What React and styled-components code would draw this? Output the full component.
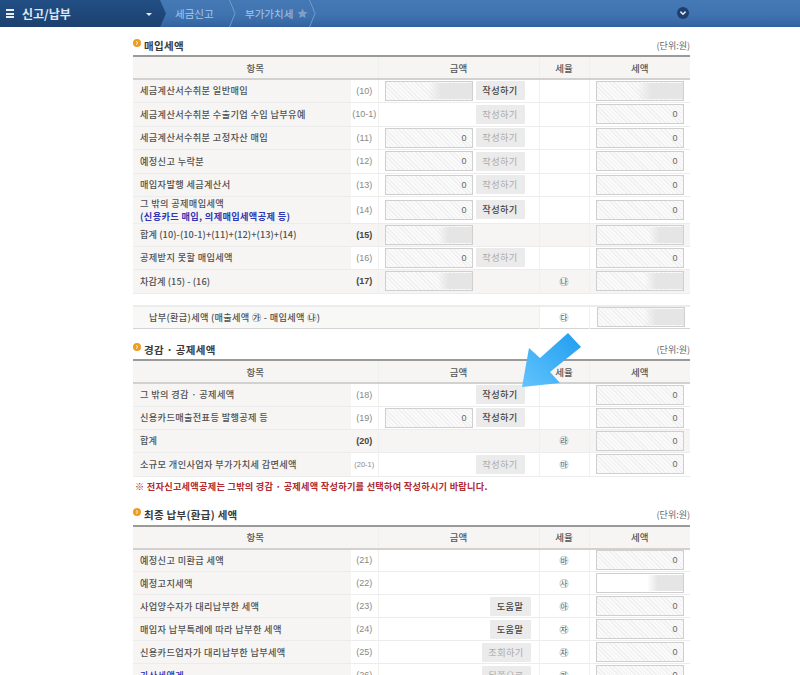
import React from 'react'
import styled, { createGlobalStyle } from 'styled-components'

const GlobalStyle = createGlobalStyle`
  html, body {
    margin: 0;
    padding: 0;
    background: #fff;
    overflow: hidden;
    height: 675px;
  }
  body {
    font-family: "Noto Sans CJK KR", "Liberation Sans", sans-serif;
    color: #4a4a4a;
  }
`

const section1 = [
  { h: 23, label: '세금계산서수취분 일반매입', no: '(10)', input: true, patch: 44, btn: '작성하기', strong: true, tax: true, taxPatch: 46 },
  { h: 24, label: '세금계산서수취분 수출기업 수입 납부유예', no: '(10-1)', btn: '작성하기', tax: '0' },
  { h: 23, label: '세금계산서수취분 고정자산 매입', no: '(11)', input: '0', btn: '작성하기', tax: '0' },
  { h: 24, label: '예정신고 누락분', no: '(12)', input: '0', btn: '작성하기', tax: '0' },
  { h: 23, label: '매입자발행 세금계산서', no: '(13)', input: '0', btn: '작성하기', tax: '0' },
  { h: 27, label: '그 밖의 공제매입세액', sub: '(신용카드 매입, 의제매입세액공제 등)', no: '(14)', input: '0', btn: '작성하기', strong: true, tax: '0' },
  { h: 23, label: '합계 (10)-(10-1)+(11)+(12)+(13)+(14)', no: '(15)', total: true, input: true, patch: 34, tax: true, taxPatch: 34 },
  { h: 23, label: '공제받지 못할 매입세액', no: '(16)', input: '0', btn: '작성하기', tax: '0' },
  { h: 24, label: '차감계 (15) - (16)', no: '(17)', total: true, input: true, patch: 34, rate: '㉯', tax: true, taxPatch: 38 },
]

const section2 = [
  { h: 23, label: '그 밖의 경감 · 공제세액', no: '(18)', btn: '작성하기', strong: true, tax: '0' },
  { h: 23, label: '신용카드매출전표등 발행공제 등', no: '(19)', input: '0', btn: '작성하기', strong: true, tax: '0' },
  { h: 23, label: '합계', no: '(20)', total: true, rate: '㉱', tax: '0' },
  { h: 24, label: '소규모 개인사업자 부가가치세 감면세액', no: '(20-1)', small: true, btn: '작성하기', rate: '㉲', tax: '0' },
]

const section3 = [
  { h: 23, label: '예정신고 미환급 세액', no: '(21)', rate: '㉳', tax: '0' },
  { h: 23, label: '예정고지세액', no: '(22)', rate: '㉴', tax: true, taxPatch: 36, white: true },
  { h: 23, label: '사업양수자가 대리납부한 세액', no: '(23)', btn: '도움말', narrow: true, strong: true, rate: '㉵', tax: '0' },
  { h: 23, label: '매입자 납부특례에 따라 납부한 세액', no: '(24)', btn: '도움말', narrow: true, strong: true, rate: '㉶', tax: '0' },
  { h: 23, label: '신용카드업자가 대리납부한 납부세액', no: '(25)', btn: '조회하기', rate: '㉷', tax: '0' },
  { h: 23, label: '가산세액계', blue: true, no: '(26)', btn: '뒤쪽으로', rate: '㉸', tax: '0' },
]

const MoneyInput = ({ value, patch, white }) => (
  <Field $white={white}>
    {typeof value === 'string' ? value : ''}
    {patch ? <Patch style={{ width: patch }} /> : null}
  </Field>
)

const Rows = ({ rows, inset }) =>
  rows.map((row) => (
    <Row key={row.no} $h={row.h} $total={row.total}>
      <LabelCell $blue={row.blue} $total={row.total}>
        {row.label}
        {row.sub ? <SubLabel>{row.sub}</SubLabel> : null}
      </LabelCell>
      <NoCell $total={row.total} $small={row.small}>{row.no}</NoCell>
      <AmountCell>
        <AmountWrap $inset={row.btn ? inset : 66}>
          {row.input ? <MoneyInput value={row.input} patch={row.patch} /> : null}
          {row.btn ? (
            <WriteButton $strong={row.strong} $narrow={row.narrow}>{row.btn}</WriteButton>
          ) : null}
        </AmountWrap>
      </AmountCell>
      <RateCell>{row.rate}</RateCell>
      <TaxCell>
        <MoneyInput value={row.tax} patch={row.taxPatch} white={row.white} />
      </TaxCell>
    </Row>
  ))

const Columns = () => (
  <colgroup>
    <col style={{ width: 218 }} />
    <col style={{ width: 27 }} />
    <col style={{ width: 161 }} />
    <col style={{ width: 50 }} />
    <col style={{ width: 101 }} />
  </colgroup>
)

const TableHead = () => (
  <thead>
    <HeadRow>
      <HeadCell colSpan={2}>항목</HeadCell>
      <HeadCell>금액</HeadCell>
      <HeadCell>세율</HeadCell>
      <HeadCell>세액</HeadCell>
    </HeadRow>
  </thead>
)

const Heading = ({ children, top }) => (
  <HeadingBar $top={top}>
    <HeadingTitle>
      <Bullet viewBox="0 0 9 9">
        <circle cx="4.5" cy="4.5" r="4.5" fill="#ee9c22" />
        <path d="M3.4 2.6 5.4 4.5 3.4 6.4" fill="none" stroke="#fff" strokeWidth="1.1" />
      </Bullet>
      {children}
    </HeadingTitle>
    <Unit>(단위:원)</Unit>
  </HeadingBar>
)

const CrumbEdge = () => (
  <EdgeIcon viewBox="0 0 7 27">
    <path d="M.5 0 6 13.5.5 27" fill="none" stroke="#6f9bcf" strokeWidth="1" />
  </EdgeIcon>
)

const App = () => {
  return (
    <>
      <GlobalStyle />
      <TopBar>
        <MenuBlock>
          <Burger>
            <i />
            <i />
            <i />
          </Burger>
          <MenuTitle>신고/납부</MenuTitle>
          <Caret />
        </MenuBlock>
        <Crumb $width={70}>
          세금신고
          <CrumbEdge />
        </Crumb>
        <Crumb $width={80}>
          부가가치세
          <StarIcon viewBox="0 0 12 12">
            <path d="M6 .6 7.6 4.2 11.5 4.6 8.6 7.2 9.4 11 6 9 2.6 11 3.4 7.2.5 4.6 4.4 4.2Z" fill="#7f9fc8" />
          </StarIcon>
          <CrumbEdge />
        </Crumb>
        <RoundButton>
          <svg viewBox="0 0 12 12" width="12" height="12">
            <path d="M3.4 4.6 6 7.2 8.6 4.6" fill="none" stroke="#dfe8f3" strokeWidth="1.5" />
          </svg>
        </RoundButton>
      </TopBar>

      <Main>
        <Heading top={11}>매입세액</Heading>
        <FormTable>
          <Columns />
          <TableHead />
          <tbody>
            <Rows rows={section1} inset={14} />
          </tbody>
        </FormTable>

        <SummaryTable>
          <Columns />
          <tbody>
            <SummaryRow>
              <SummaryLabel colSpan={3}>납부(환급)세액 (매출세액 ㉮ - 매입세액 ㉯)</SummaryLabel>
              <RateCell>㉰</RateCell>
              <TaxCell>
                <SummaryField>
                  <MoneyInput value patch={40} />
                </SummaryField>
              </TaxCell>
            </SummaryRow>
          </tbody>
        </SummaryTable>

        <Heading top={13}>경감 · 공제세액</Heading>
        <FormTable>
          <Columns />
          <TableHead />
          <tbody>
            <Rows rows={section2} inset={14} />
          </tbody>
        </FormTable>
        <Notice>※ 전자신고세액공제는 그밖의 경감 · 공제세액 작성하기를 선택하여 작성하시기 바랍니다.</Notice>

        <Heading top={13}>최종 납부(환급) 세액</Heading>
        <FormTable>
          <Columns />
          <TableHead />
          <tbody>
            <Rows rows={section3} inset={8} />
          </tbody>
        </FormTable>
      </Main>

      <Arrow viewBox="0 0 70 62">
        <defs>
          <linearGradient id="arrowFill" x1="1" y1="0" x2="0" y2="1">
            <stop offset="0" stopColor="#1f9df0" />
            <stop offset="1" stopColor="#62c4fd" />
          </linearGradient>
        </defs>
        <path d="M1 56 8 17 19 27 47 2 60 16 29 41 39 52Z" fill="url(#arrowFill)" />
      </Arrow>
    </>
  )
}

const TopBar = styled.header`
  display: flex;
  align-items: stretch;
  height: 27px;
  background: linear-gradient(#4479b5, #3f74b0 55%, #33639f);
`
const MenuBlock = styled.div`
  display: flex;
  align-items: center;
  width: 166px;
  padding-left: 6px;
  box-sizing: border-box;
  background: linear-gradient(#224f85, #1c406f);
  clip-path: polygon(0 0, 160px 0, 166px 13.5px, 160px 27px, 0 27px);
`
const Burger = styled.span`
  display: flex;
  flex-direction: column;
  gap: 1.5px;
  width: 8px;
  margin-right: 8px;
  i {
    display: block;
    height: 2px;
    background: #e6edf5;
  }
`
const MenuTitle = styled.span`
  flex: 1;
  color: #dfe8f3;
  font-size: 12px;
  font-weight: 700;
`
const Caret = styled.span`
  width: 0;
  height: 0;
  margin-right: 14px;
  margin-top: 1px;
  border: 3px solid transparent;
  border-top: 3px solid #e6edf5;
  border-bottom: 0;
`
const Crumb = styled.div`
  display: flex;
  align-items: center;
  width: ${(props) => props.$width}px;
  padding-left: 9px;
  box-sizing: border-box;
  color: #a9c6e9;
  font-size: 10.5px;
  white-space: nowrap;
`
const EdgeIcon = styled.svg`
  flex: none;
  width: 7px;
  height: 27px;
  margin-left: auto;
`
const StarIcon = styled.svg`
  flex: none;
  width: 11px;
  height: 11px;
  margin-left: 4px;
`
const RoundButton = styled.span`
  display: flex;
  align-items: center;
  justify-content: center;
  width: 12px;
  height: 12px;
  margin: 7px 0 0 361px;
  border-radius: 50%;
  background: #1e3f6e;
`
const Main = styled.main`
  width: 557px;
  margin-left: 133px;
`
const HeadingBar = styled.div`
  display: flex;
  justify-content: space-between;
  align-items: center;
  height: 17px;
  padding-bottom: 3px;
  box-sizing: border-box;
  margin-top: ${(props) => props.$top}px;
`
const HeadingTitle = styled.h2`
  display: flex;
  align-items: center;
  margin: 0;
  color: #3a3a3a;
  font-size: 10.5px;
  font-weight: 700;
  letter-spacing: 0.3px;
`
const Bullet = styled.svg`
  width: 8px;
  height: 8px;
  margin: -5px 3px 0 0;
`
const Unit = styled.span`
  color: #666;
  font-size: 9px;
`
const FormTable = styled.table`
  width: 557px;
  table-layout: fixed;
  border-collapse: collapse;
  border-top: 2px solid #9a9a98;
`
const SummaryTable = styled(FormTable)`
  margin-top: 11px;
  border-top: 2px solid #ececec;
  border-bottom: 1px solid #d4d4d4;
`
const HeadRow = styled.tr`
  height: 23px;
  background: #f6f5f3;
  border-bottom: 2px solid #d2d1cf;
`
const HeadCell = styled.th`
  padding: 0;
  border-left: 1px solid #efefed;
  color: #555;
  font-size: 9.5px;
  font-weight: 500;
  &:first-child {
    border-left: 0;
  }
`
const Row = styled.tr`
  height: ${(props) => props.$h}px;
  border-bottom: 1px solid #ececec;
  background: ${(props) => (props.$total ? '#f6f5f3' : '#fff')};
`
const LabelCell = styled.td`
  padding: 0 0 0 7px;
  background: #f6f5f3;
  color: ${(props) => (props.$blue ? '#2a2ab8' : '#505050')};
  font-size: 9.2px;
  font-weight: 500;
  line-height: 13px;
  letter-spacing: ${(props) => (props.$total ? 0.08 : 0.35)}px;
  white-space: nowrap;
`
const SubLabel = styled.div`
  color: #2f37b5;
  font-weight: 700;
`
const NoCell = styled.td`
  padding: 0;
  text-align: center;
  color: ${(props) => (props.$total ? '#444' : '#888')};
  font-family: "Liberation Sans", sans-serif;
  font-size: ${(props) => (props.$small ? 7.5 : 9)}px;
  font-weight: ${(props) => (props.$total ? 700 : 400)};
`
const AmountCell = styled.td`
  padding: 0;
  border-left: 1px solid #f0f0f0;
`
const AmountWrap = styled.div`
  display: flex;
  justify-content: flex-end;
  align-items: center;
  gap: 3px;
  padding-right: ${(props) => props.$inset}px;
`
const RateCell = styled.td`
  padding: 0;
  border-left: 1px solid #f0f0f0;
  text-align: center;
  color: #666;
  font-size: 9px;
`
const TaxCell = styled.td`
  padding: 0 0 0 6px;
  border-left: 1px solid #f0f0f0;
`
const Field = styled.div`
  position: relative;
  width: 88px;
  height: 20px;
  padding-right: 5px;
  box-sizing: border-box;
  overflow: hidden;
  border: 1px solid #cfcfcf;
  background: ${(props) =>
    props.$white
      ? '#fff'
      : 'repeating-linear-gradient(45deg, #f0f0f0 0, #f0f0f0 1px, #fafafa 1px, #fafafa 3px)'};
  color: #666;
  font-family: "Liberation Sans", sans-serif;
  font-size: 9px;
  line-height: 18px;
  text-align: right;
`
const Patch = styled.span`
  position: absolute;
  top: 1px;
  right: 0;
  bottom: 1px;
  background: linear-gradient(to right, rgba(229, 229, 229, 0), #e5e5e5 30%);
`
const WriteButton = styled.span`
  display: block;
  width: ${(props) => (props.$narrow ? 41 : 49)}px;
  height: 19px;
  border-radius: 1px;
  background: #ebebeb;
  color: ${(props) => (props.$strong ? '#444' : '#aaa')};
  font-size: 9.2px;
  font-weight: ${(props) => (props.$strong ? 500 : 400)};
  letter-spacing: 0.4px;
  line-height: 19px;
  text-align: center;
`
const SummaryRow = styled.tr`
  height: 23px;
`
const SummaryLabel = styled.td`
  padding: 0 0 0 16px;
  background: #f8f8f7;
  color: #505050;
  font-size: 9.2px;
  font-weight: 500;
  letter-spacing: 0.3px;
`
const SummaryField = styled.div`
  margin-left: 1px;
`
const Notice = styled.p`
  height: 18px;
  margin: 0;
  padding-left: 2px;
  padding-top: 2px;
  box-sizing: border-box;
  color: #b02a30;
  font-size: 9.2px;
  font-weight: 700;
  letter-spacing: 0.25px;
  line-height: 14px;
`
const Arrow = styled.svg`
  position: absolute;
  left: 521px;
  top: 331px;
  width: 70px;
  height: 62px;
`

export default App
